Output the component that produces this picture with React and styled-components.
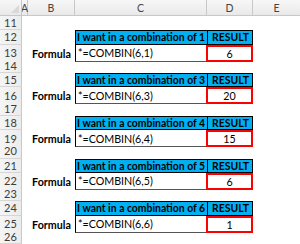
import styled, { createGlobalStyle } from "styled-components";

const GlobalStyle = createGlobalStyle`
  html, body {
    margin: 0;
    padding: 0;
    background: #fff;
  }
  body {
    width: 300px;
    height: 244px;
    overflow: hidden;
    font-family: Lato, "Open Sans", sans-serif;
  }
`;

const COLS = "22px 6px 47px 132px 46px 1fr";
const ROW_H = "14.25px";

// whole sheet
const Sheet = styled.div`
  display: flex;
  flex-direction: column;
  width: 300px;
  height: 244px;
  background: #fff;
`;

// column letters bar
const HeaderBar = styled.div`
  display: grid;
  grid-template-columns: ${COLS};
  height: 16px;
  background: linear-gradient(#f7f7f7, #e9e9e9);
  border-bottom: 1px solid #c8c8c8;
  box-sizing: border-box;
`;

const Corner = styled.div`
  position: relative;
  border-right: 1px solid #c8c8c8;
  &::after {
    content: "";
    position: absolute;
    right: 2px;
    bottom: 2px;
    border-left: 8px solid transparent;
    border-bottom: 8px solid #d8d8d8;
  }
`;

const ColLabel = styled.div`
  display: flex;
  align-items: center;
  justify-content: center;
  font-size: 10.5px;
  color: #444;
  border-right: 1px solid #c8c8c8;
  ${(p) => p.$last && "border-right: none;"}
`;

const Row = styled.div`
  display: grid;
  grid-template-columns: ${COLS};
  height: ${ROW_H};
  flex: none;
`;

const RowNum = styled.div`
  display: flex;
  align-items: center;
  justify-content: center;
  font-size: 11px;
  color: #3c3c3c;
  background: linear-gradient(90deg, #f5f5f5, #ececec);
  border-right: 1px solid #c8c8c8;
  border-bottom: 1px solid #d6d6d6;
  box-sizing: border-box;
`;

const Cell = styled.div`
  display: flex;
  align-items: center;
  min-width: 0;
  white-space: nowrap;
  font-size: 10.7px;
  color: #000;
  box-sizing: border-box;
`;

const Label = styled(Cell)`
  justify-content: center;
  font-weight: 700;
  grid-column: 3;
`;

// blue table heading
const HeadCell = styled(Cell)`
  background: #00b0f0;
  font-weight: 700;
  font-size: 10.4px;
  border: 1px solid #000;
  border-right: ${(p) => (p.$left ? "none" : "1px solid #000")};
  padding-left: 1px;
  justify-content: ${(p) => (p.$center ? "center" : "flex-start")};
`;

const FormulaCell = styled(Cell)`
  grid-column: 4;
  padding-left: 2px;
  border-left: 1px solid #000;
  border-bottom: 1px solid #555;
`;

const ResultCell = styled(Cell)`
  justify-content: center;
  border: 2px solid #ff0000;
  margin-left: -1px;
`;

const blocks = [
  { start: 12, k: 1, result: 6 },
  { start: 15, k: 3, result: 20 },
  { start: 18, k: 4, result: 15 },
  { start: 21, k: 5, result: 6 },
  { start: 24, k: 6, result: 1 },
];

const App = () => {
  const rows = [];
  for (let n = 11; n <= 26; n++) {
    const head = blocks.find((b) => b.start === n);
    const body = blocks.find((b) => b.start + 1 === n);
    rows.push(
      <Row key={n}>
        <RowNum>{n}</RowNum>
        {head && (
          <>
            <HeadCell $left style={{ gridColumn: 4 }}>
              I want in a combination of {head.k}
            </HeadCell>
            <HeadCell $center style={{ gridColumn: 5 }}>
              RESULT
            </HeadCell>
          </>
        )}
        {body && (
          <>
            <Label>Formula</Label>
            <FormulaCell>*=COMBIN(6,{body.k})</FormulaCell>
            <ResultCell>{body.result}</ResultCell>
          </>
        )}
      </Row>
    );
  }

  return (
    <>
      <GlobalStyle />
      <Sheet>
        <HeaderBar>
          <Corner />
          <ColLabel>A</ColLabel>
          <ColLabel>B</ColLabel>
          <ColLabel>C</ColLabel>
          <ColLabel>D</ColLabel>
          <ColLabel $last>E</ColLabel>
        </HeaderBar>
        {rows}
      </Sheet>
    </>
  );
};

export default App;
